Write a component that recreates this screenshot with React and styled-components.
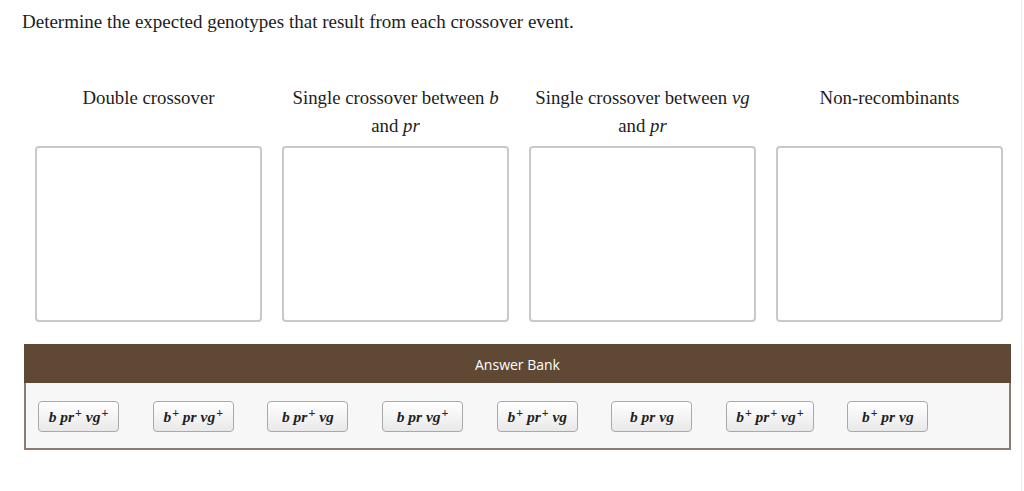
import React from 'react'
import styled, { createGlobalStyle } from 'styled-components'

const GlobalStyle = createGlobalStyle`
  html, body {
    margin: 0;
    padding: 0;
    background: #ffffff;
  }
  body {
    font-family: "Liberation Serif", "Times New Roman", serif;
    color: #1d1d1d;
  }
`

const Page = styled.div`
  width: 1022px;
  min-height: 491px;
  box-sizing: border-box;
  border-right: 1px solid #ececec;
  padding: 10px 0 0 0;
`

const Prompt = styled.p`
  margin: 0 0 0 22px;
  font-size: 19px;
  line-height: 24px;
`

const Columns = styled.div`
  display: grid;
  grid-template-columns: repeat(4, 227px);
  column-gap: 20px;
  margin: 50px 0 0 35px;
`

const Column = styled.div`
  display: flex;
  flex-direction: column;
  align-items: center;
`

const Heading = styled.div`
  height: 62px;
  width: 227px;
  font-size: 18.8px;
  line-height: 28px;
  text-align: center;
  i { font-style: italic; }
`

const DropBox = styled.div`
  width: 227px;
  height: 176px;
  box-sizing: border-box;
  border: 2px solid #c9c9c9;
  border-radius: 4px;
  background: #fff;
`

const Bank = styled.div`
  margin: 22px 0 0 24px;
  width: 987px;
  box-sizing: border-box;
  border: 2px solid #8c7b6e;
  border-top: none;
`

const BankHeader = styled.div`
  height: 39px;
  background: #5f4834;
  color: #ffffff;
  font-family: "Open Sans", "Liberation Sans", sans-serif;
  font-size: 14px;
  font-weight: 500;
  display: flex;
  align-items: center;
  justify-content: center;
  margin: 0 -2px;
  padding-top: 2px;
  box-sizing: border-box;
`

const BankBody = styled.div`
  background: #f7f7f7;
  display: flex;
  gap: 33.7px;
  padding: 18px 12px 16px 12px;
`

const Chip = styled.div`
  min-width: 81px;
  height: 31px;
  box-sizing: border-box;
  padding: 0 9px;
  border: 1px solid #a9a9a9;
  border-radius: 4px;
  background: linear-gradient(#ffffff, #e9e9e9);
  display: flex;
  align-items: center;
  justify-content: center;
`

const Label = styled.span`
  font-size: 15.5px;
  font-weight: bold;
  font-style: italic;
  color: #222;
  white-space: nowrap;
  sup {
    font-size: 12px;
    font-style: normal;
    line-height: 0;
    vertical-align: 5px;
    margin-left: 1px;
  }
`

const headings = [
  <>Double crossover</>,
  <>Single crossover between <i>b</i> and <i>pr</i></>,
  <>Single crossover between <i>vg</i> and <i>pr</i></>,
  <>Non-recombinants</>,
]

// each gene is [name, wild-type?]
const answers = [
  [['b', 0], ['pr', 1], ['vg', 1]],
  [['b', 1], ['pr', 0], ['vg', 1]],
  [['b', 0], ['pr', 1], ['vg', 0]],
  [['b', 0], ['pr', 0], ['vg', 1]],
  [['b', 1], ['pr', 1], ['vg', 0]],
  [['b', 0], ['pr', 0], ['vg', 0]],
  [['b', 1], ['pr', 1], ['vg', 1]],
  [['b', 1], ['pr', 0], ['vg', 0]],
]

function Genotype({ genes }) {
  return (
    <Chip>
      <Label>
        {genes.map(([g, plus], i) => (
          <React.Fragment key={g}>
            {i > 0 ? ' ' : ''}
            {g}
            {plus ? <sup>+</sup> : null}
          </React.Fragment>
        ))}
      </Label>
    </Chip>
  )
}

export default function App() {
  return (
    <>
      <GlobalStyle />
      <Page>
        <Prompt>Determine the expected genotypes that result from each crossover event.</Prompt>
        <Columns>
          {headings.map((h, i) => (
            <Column key={i}>
              <Heading>{h}</Heading>
              <DropBox />
            </Column>
          ))}
        </Columns>
        <Bank>
          <BankHeader>Answer Bank</BankHeader>
          <BankBody>
            {answers.map((a, i) => <Genotype key={i} genes={a} />)}
          </BankBody>
        </Bank>
      </Page>
    </>
  )
}
